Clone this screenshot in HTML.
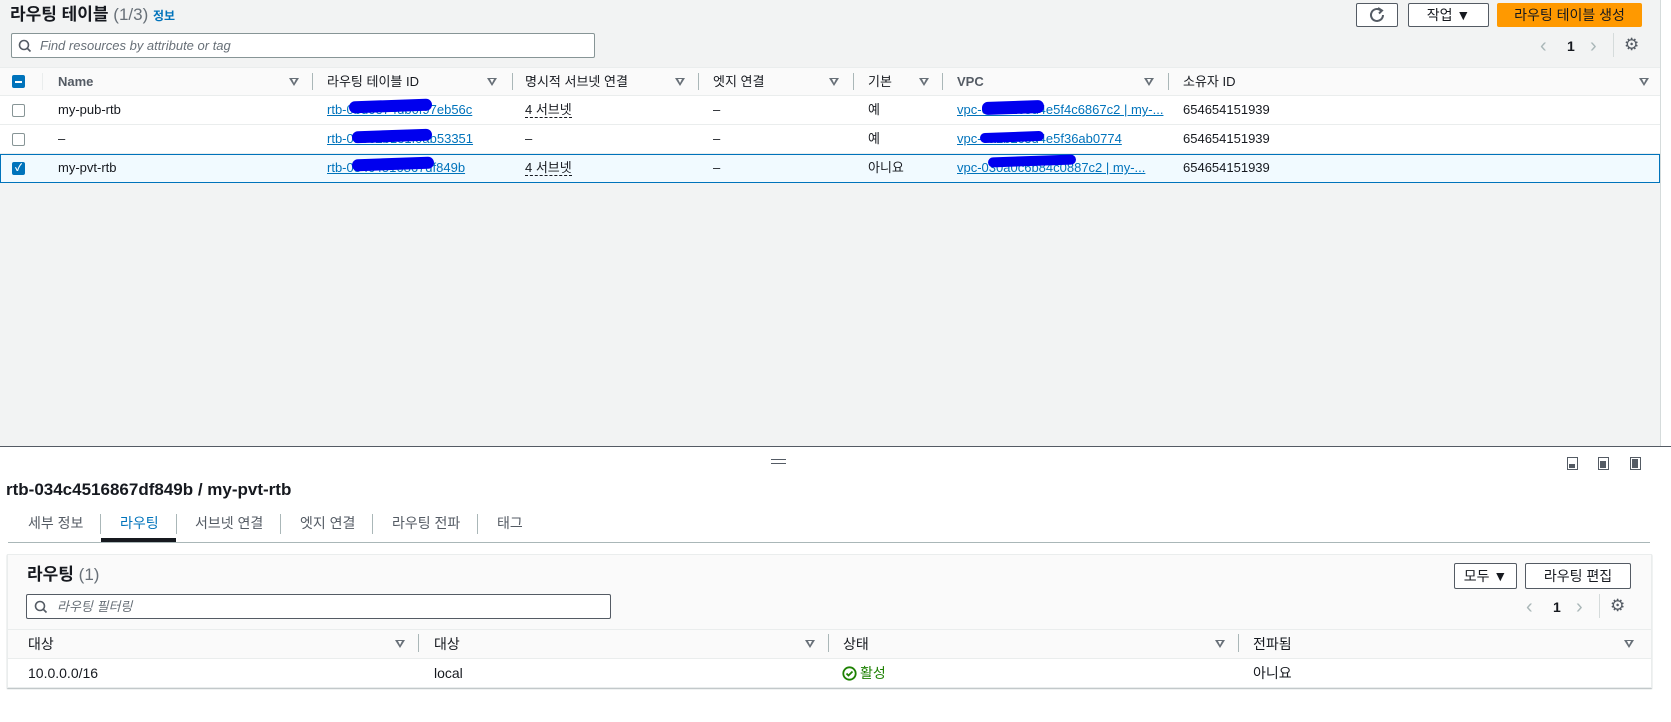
<!DOCTYPE html>
<html><head><meta charset="utf-8"><style>
*{box-sizing:border-box;margin:0;padding:0}
body{width:1671px;height:722px;position:relative;background:#fff;font-family:"Liberation Sans","Noto Sans CJK KR",sans-serif;font-size:13px;color:#16191f;overflow:hidden}
.a{position:absolute;white-space:nowrap;line-height:16px}
.top{position:absolute;left:0;top:0;width:1660px;height:447px;background:#f2f3f3}
.btn{position:absolute;border:1px solid #545b64;background:#fff;border-radius:2px;font-size:14px;text-align:center;color:#16191f}
.lnk{color:#0073bb;text-decoration:underline}
.sep{position:absolute;width:1px;background:#aab7b8}
.tri{position:absolute;width:0;height:0;border-left:5px solid transparent;border-right:5px solid transparent;border-top:8px solid #687078}
.tri:after{content:"";position:absolute;left:-2px;top:-7px;border-left:2px solid transparent;border-right:2px solid transparent;border-top:4px solid #fff}
.cb{position:absolute;width:13px;height:13px;border:1px solid #879596;border-radius:2px;background:#fff}
.blob{position:absolute;background:#0000ee;border-radius:6px;transform:rotate(-2deg)}
.dot{border-bottom:1px dashed #16191f}
</style></head><body>
<div class="top"></div>
<div class="a" style="left:10px;top:5px;font-size:17px;line-height:20px;font-weight:bold">라우팅 테이블 <span style="font-weight:normal;color:#687078">(1/3)</span> <span style="font-size:12px;color:#0073bb;font-weight:bold">정보</span></div>
<div class="btn" style="left:1356px;top:3px;width:42px;height:24px"><svg width="18" height="18" viewBox="0 0 18 18" style="margin-top:2px"><path d="M13 4.5A6 6 0 1 0 15 9" fill="none" stroke="#545b64" stroke-width="2"/><path d="M10 2l4 2.5-3 3" fill="none" stroke="#545b64" stroke-width="2"/></svg></div>
<div class="btn" style="left:1408px;top:3px;width:81px;height:24px;line-height:22px">작업 ▼</div>
<div class="a" style="left:1497px;top:3px;width:145px;height:24px;background:#ff9900;border-radius:2px;font-size:14px;line-height:24px;text-align:center;color:#16191f">라우팅 테이블 생성</div>
<div class="a" style="left:11px;top:33px;width:584px;height:25px;border:1px solid #879596;background:#fff;border-radius:2px"></div>
<svg class="a" style="left:18px;top:39px" width="14" height="14"><circle cx="6" cy="6" r="4.5" fill="none" stroke="#545b64" stroke-width="1.6"/><path d="M9.5 9.5l3 3" stroke="#545b64" stroke-width="1.6"/></svg>
<div class="a" style="left:40px;top:38px;font-style:italic;color:#687078;font-size:13px">Find resources by attribute or tag</div>
<div class="a" style="left:1540px;top:36px;font-size:20px;line-height:20px;color:#aab7b8">‹</div>
<div class="a" style="left:1567px;top:38px;font-size:14px;font-weight:bold">1</div>
<div class="a" style="left:1590px;top:36px;font-size:20px;line-height:20px;color:#aab7b8">›</div>
<div class="sep" style="left:1613px;top:33px;height:24px;background:#d5dbdb"></div>
<div class="a" style="left:1624px;top:35px;font-size:17px;line-height:20px;color:#545b64">⚙</div>
<div class="a" style="left:0;top:67px;width:1660px;height:29px;background:#fafafa;border-top:1px solid #eaeded;border-bottom:1px solid #eaeded"></div>
<div class="a" style="left:0;top:96px;width:1660px;height:29px;background:#fff;border-bottom:1px solid #eaeded"></div>
<div class="a" style="left:0;top:125px;width:1660px;height:29px;background:#fff;border-bottom:1px solid #eaeded"></div>
<div class="a" style="left:0;top:154px;width:1660px;height:29px;background:#f1faff;border:1px solid #0073bb"></div>
<div class="cb" style="left:12px;top:75px;background:#0073bb;border-color:#0073bb"><div style="position:absolute;left:2px;top:5px;width:7px;height:2px;background:#fff"></div></div>
<div class="cb" style="left:12px;top:104px"></div>
<div class="cb" style="left:12px;top:133px"></div>
<div class="cb" style="left:12px;top:162px;background:#0073bb;border-color:#0073bb;color:#fff;font-size:10px;line-height:11px;text-align:center;font-weight:bold">✓</div>
<div class="sep" style="left:42px;top:73px;height:17px;background:#eaeded"></div>
<div style="font-weight:bold;color:#545b64">
<div class="a" style="left:58px;top:74px">Name</div>
<div class="a" style="left:327px;top:74px;font-weight:normal;color:#16191f">라우팅 테이블 ID</div>
<div class="a" style="left:525px;top:74px;font-weight:normal;color:#16191f">명시적 서브넷 연결</div>
<div class="a" style="left:713px;top:74px;font-weight:normal;color:#16191f">엣지 연결</div>
<div class="a" style="left:868px;top:74px;font-weight:normal;color:#16191f">기본</div>
<div class="a" style="left:957px;top:74px">VPC</div>
<div class="a" style="left:1183px;top:74px;font-weight:normal;color:#16191f">소유자 ID</div>
</div>
<div class="sep" style="left:312px;top:73px;height:17px"></div><div class="sep" style="left:512px;top:73px;height:17px"></div><div class="sep" style="left:698px;top:73px;height:17px"></div><div class="sep" style="left:853px;top:73px;height:17px"></div><div class="sep" style="left:942px;top:73px;height:17px"></div><div class="sep" style="left:1168px;top:73px;height:17px"></div>
<div class="tri" style="left:289px;top:78px"></div><div class="tri" style="left:487px;top:78px"></div><div class="tri" style="left:675px;top:78px"></div><div class="tri" style="left:829px;top:78px"></div><div class="tri" style="left:919px;top:78px"></div><div class="tri" style="left:1144px;top:78px"></div><div class="tri" style="left:1639px;top:78px"></div>
<div class="a" style="left:58px;top:102px">my-pub-rtb</div>
<div class="a" style="left:58px;top:131px">–</div>
<div class="a" style="left:58px;top:160px">my-pvt-rtb</div>
<div class="a lnk" style="left:327px;top:102px">rtb-0bd0e74db0f97eb56c</div>
<div class="a lnk" style="left:327px;top:131px">rtb-0a6e2b1e1f0ab53351</div>
<div class="a lnk" style="left:327px;top:160px">rtb-034c4516867df849b</div>
<div class="blob" style="left:349px;top:100px;width:83px;height:12px"></div>
<div class="blob" style="left:352px;top:130px;width:80px;height:12px"></div>
<div class="blob" style="left:352px;top:158px;width:82px;height:12px"></div>
<div class="a" style="left:525px;top:102px"><span class="dot">4 서브넷</span></div>
<div class="a" style="left:525px;top:131px">–</div>
<div class="a" style="left:525px;top:160px"><span class="dot">4 서브넷</span></div>
<div class="a" style="left:713px;top:102px">–</div><div class="a" style="left:713px;top:131px">–</div><div class="a" style="left:713px;top:160px">–</div>
<div class="a" style="left:868px;top:102px">예</div><div class="a" style="left:868px;top:131px">예</div><div class="a" style="left:868px;top:160px">아니요</div>
<div class="a lnk" style="left:957px;top:102px">vpc-0a1b2c3d4e5f4c6867c2 | my-...</div>
<div class="a lnk" style="left:957px;top:131px">vpc-0a1b2c3d4e5f36ab0774</div>
<div class="a lnk" style="left:957px;top:160px">vpc-030a0c6b84c0887c2 | my-...</div>
<div class="blob" style="left:982px;top:101px;width:62px;height:13px"></div>
<div class="blob" style="left:980px;top:132px;width:64px;height:10px"></div>
<div class="blob" style="left:988px;top:156px;width:88px;height:10px"></div>
<div class="a" style="left:1183px;top:102px">654654151939</div><div class="a" style="left:1183px;top:131px">654654151939</div><div class="a" style="left:1183px;top:160px">654654151939</div>
<div class="a" style="left:1660px;top:0;width:1px;height:447px;background:#d5dbdb"></div>
<div class="a" style="left:0;top:446px;width:1671px;height:1px;background:#545b64"></div>
<div class="a" style="left:771px;top:459px;width:15px;height:1px;background:#545b64"></div>
<div class="a" style="left:771px;top:463px;width:15px;height:1px;background:#545b64"></div>
<div class="a" style="left:1567px;top:457px;width:11px;height:13px;border:1.5px solid #545b64"><div style="position:absolute;left:1px;bottom:1px;width:6px;height:4px;background:#545b64"></div></div>
<div class="a" style="left:1598px;top:457px;width:11px;height:13px;border:1.5px solid #545b64"><div style="position:absolute;left:1px;top:3px;width:6px;height:7px;background:#545b64"></div></div>
<div class="a" style="left:1630px;top:457px;width:11px;height:13px;border:1.5px solid #545b64"><div style="position:absolute;left:1px;top:1px;width:6px;height:9px;background:#545b64"></div></div>
<div class="a" style="left:6px;top:480px;font-size:17px;line-height:20px;font-weight:bold">rtb-034c4516867df849b / my-pvt-rtb</div>
<div class="a" style="left:28px;top:515px;font-size:14px;color:#545b64">세부 정보</div>
<div class="a" style="left:120px;top:515px;font-size:14px;color:#0073bb">라우팅</div>
<div class="a" style="left:195px;top:515px;font-size:14px;color:#545b64">서브넷 연결</div>
<div class="a" style="left:300px;top:515px;font-size:14px;color:#545b64">엣지 연결</div>
<div class="a" style="left:392px;top:515px;font-size:14px;color:#545b64">라우팅 전파</div>
<div class="a" style="left:497px;top:515px;font-size:14px;color:#545b64">태그</div>
<div class="sep" style="left:100px;top:514px;height:20px"></div><div class="sep" style="left:176px;top:514px;height:20px"></div><div class="sep" style="left:280px;top:514px;height:20px"></div><div class="sep" style="left:372px;top:514px;height:20px"></div><div class="sep" style="left:477px;top:514px;height:20px"></div>
<div class="a" style="left:8px;top:542px;width:1642px;height:1px;background:#aab7b8"></div>
<div class="a" style="left:101px;top:538px;width:75px;height:4px;background:#16191f"></div>
<div class="a" style="left:7px;top:554px;width:1645px;height:134px;background:#fafafa;border:1px solid #eaeded;box-shadow:0 1px 1px rgba(0,28,36,.3)"></div>
<div class="a" style="left:27px;top:565px;font-size:17px;line-height:20px;font-weight:bold">라우팅 <span style="font-weight:normal;color:#687078">(1)</span></div>
<div class="btn" style="left:1454px;top:563px;width:63px;height:26px;line-height:24px">모두 ▼</div>
<div class="btn" style="left:1525px;top:563px;width:106px;height:26px;line-height:24px">라우팅 편집</div>
<div class="a" style="left:26px;top:594px;width:585px;height:25px;border:1px solid #545b64;background:#fff;border-radius:2px"></div>
<svg class="a" style="left:34px;top:600px" width="14" height="14"><circle cx="6" cy="6" r="4.5" fill="none" stroke="#545b64" stroke-width="1.6"/><path d="M9.5 9.5l3 3" stroke="#545b64" stroke-width="1.6"/></svg>
<div class="a" style="left:57px;top:599px;font-style:italic;color:#687078">라우팅 필터링</div>
<div class="a" style="left:1526px;top:597px;font-size:20px;line-height:20px;color:#aab7b8">‹</div>
<div class="a" style="left:1553px;top:599px;font-size:14px;font-weight:bold">1</div>
<div class="a" style="left:1576px;top:597px;font-size:20px;line-height:20px;color:#aab7b8">›</div>
<div class="sep" style="left:1599px;top:594px;height:24px;background:#d5dbdb"></div>
<div class="a" style="left:1610px;top:596px;font-size:17px;line-height:20px;color:#545b64">⚙</div>
<div class="a" style="left:8px;top:629px;width:1643px;height:30px;border-top:1px solid #eaeded;border-bottom:1px solid #eaeded;background:#fafafa"></div>
<div class="a" style="left:8px;top:659px;width:1643px;height:28px;background:#fff"></div>
<div class="a" style="left:28px;top:636px;font-size:14px">대상</div>
<div class="a" style="left:434px;top:636px;font-size:14px">대상</div>
<div class="a" style="left:843px;top:636px;font-size:14px">상태</div>
<div class="a" style="left:1253px;top:636px;font-size:14px">전파됨</div>
<div class="sep" style="left:418px;top:634px;height:18px"></div><div class="sep" style="left:828px;top:634px;height:18px"></div><div class="sep" style="left:1238px;top:634px;height:18px"></div>
<div class="tri" style="left:395px;top:640px"></div><div class="tri" style="left:805px;top:640px"></div><div class="tri" style="left:1215px;top:640px"></div><div class="tri" style="left:1624px;top:640px"></div>
<div class="a" style="left:28px;top:665px;font-size:14px">10.0.0.0/16</div>
<div class="a" style="left:434px;top:665px;font-size:14px">local</div>
<svg class="a" style="left:842px;top:666px" width="15" height="15"><circle cx="7.5" cy="7.5" r="6.2" fill="none" stroke="#1d8102" stroke-width="1.8"/><path d="M4.5 7.5l2 2 4-4" fill="none" stroke="#1d8102" stroke-width="1.8"/></svg>
<div class="a" style="left:860px;top:665px;font-size:14px;color:#1d8102">활성</div>
<div class="a" style="left:1253px;top:665px;font-size:14px">아니요</div>
</body></html>
